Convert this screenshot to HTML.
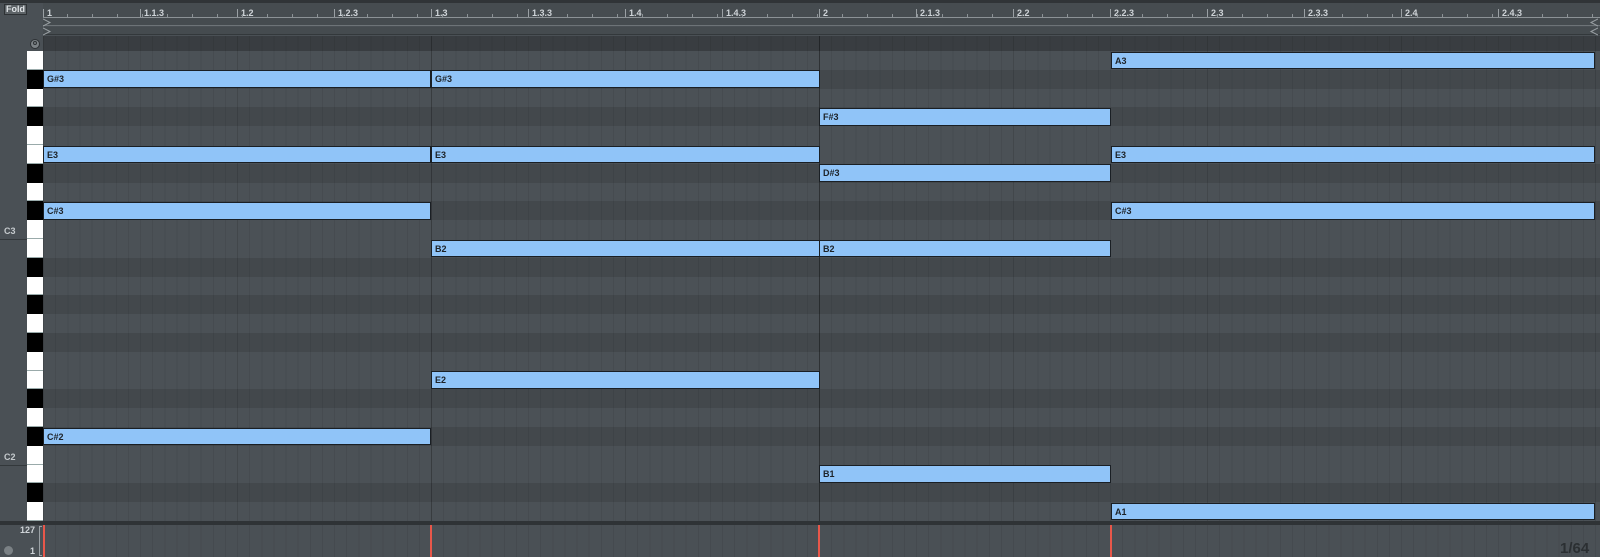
<!DOCTYPE html>
<html><head><meta charset="utf-8"><style>
*{margin:0;padding:0;box-sizing:border-box}
body{width:1600px;height:557px;overflow:hidden;background:#4a5055;font-family:"Liberation Sans",sans-serif;position:relative}
div{position:absolute}
.row{left:43px;width:1557px;height:18.8px}
.w{background:#4b5156}.b{background:#43484c}
.k{left:27px;width:16px;height:18.8px}
.kw{background:#fff;border-bottom:1px solid #9aa}
.kb{background:#000}
.n{height:17.8px;background:#90c4f8;border:1px solid #1a1f24;font-size:9px;font-weight:bold;color:#1d2227;padding:4px 0 0 3px;line-height:9px}
.rl{top:8px;font-size:9px;font-weight:bold;color:#cfd4d8}
.tk{top:9px;width:1px;height:8px;background:#9aa0a4}
.vel{width:2px;top:525px;height:32px;background:#e8574a}
</style></head><body>
<div style="left:0;top:0;width:1600px;height:3px;background:#303437"></div>
<div style="left:43px;top:3px;width:1557px;height:14px;background:#464c50"></div>
<div style="left:43px;top:17px;width:1557px;height:1px;background:#8c9296"></div>
<div style="left:43px;top:18px;width:1557px;height:8px;background:#454b4f;border-bottom:1px solid #6d7377"></div>
<div style="left:43px;top:27px;width:1557px;height:8px;background:#454b4f;border-bottom:1px solid #33383b"></div>
<div style="left:43px;top:36px;width:1557px;height:15px;background:#393d41"></div>
<div style="left:4px;top:4px;width:23px;height:11px;background:#5d6367;border:1px solid #2e3235;font-size:9px;font-weight:bold;color:#dfe3e6;text-align:center;line-height:9px">Fold</div>
<div style="left:30px;top:39px;width:10px;height:10px;border-radius:50%;background:#7b8185;border:1px solid #2e3235"></div>
<div style="left:33px;top:41px;width:4px;height:4px;border-radius:50%;border:1px solid #2e3235"></div>
<svg style="position:absolute;left:43px;top:18px" width="10" height="18"><path d="M0 1L7 4.5L0 8M0 10L7 13.5L0 17" stroke="#9aa0a4" fill="none"/></svg>
<svg style="position:absolute;left:1588px;top:18px" width="10" height="18"><path d="M10 1L3 4.5L10 8M10 10L3 13.5L10 17" stroke="#9aa0a4" fill="none"/></svg>

<div class="tk" style="left:43px"></div><div class="rl" style="left:47px">1</div>
<div class="tk" style="left:140px"></div><div class="rl" style="left:144px">1.1.3</div>
<div class="tk" style="left:237px"></div><div class="rl" style="left:241px">1.2</div>
<div class="tk" style="left:334px"></div><div class="rl" style="left:338px">1.2.3</div>
<div class="tk" style="left:431px"></div><div class="rl" style="left:435px">1.3</div>
<div class="tk" style="left:528px"></div><div class="rl" style="left:532px">1.3.3</div>
<div class="tk" style="left:625px"></div><div class="rl" style="left:629px">1.4</div>
<div class="tk" style="left:722px"></div><div class="rl" style="left:726px">1.4.3</div>
<div class="tk" style="left:819px"></div><div class="rl" style="left:823px">2</div>
<div class="tk" style="left:916px"></div><div class="rl" style="left:920px">2.1.3</div>
<div class="tk" style="left:1013px"></div><div class="rl" style="left:1017px">2.2</div>
<div class="tk" style="left:1110px"></div><div class="rl" style="left:1114px">2.2.3</div>
<div class="tk" style="left:1207px"></div><div class="rl" style="left:1211px">2.3</div>
<div class="tk" style="left:1304px"></div><div class="rl" style="left:1308px">2.3.3</div>
<div class="tk" style="left:1401px"></div><div class="rl" style="left:1405px">2.4</div>
<div class="tk" style="left:1498px"></div><div class="rl" style="left:1502px">2.4.3</div>
<div style="left:43px;top:14px;width:1557px;height:3px;background:repeating-linear-gradient(90deg,transparent 0 24px,#8c9296 24px 25px)"></div>

<div class="row w" style="top:51px"></div><div class="row b" style="top:69.8px"></div><div class="row w" style="top:88.6px"></div><div class="row b" style="top:107.4px"></div><div class="row w" style="top:126.2px"></div><div class="row w" style="top:145px"></div><div class="row b" style="top:163.8px"></div><div class="row w" style="top:182.6px"></div><div class="row b" style="top:201.4px"></div><div class="row w" style="top:220.2px"></div><div class="row w" style="top:239px"></div><div class="row b" style="top:257.8px"></div><div class="row w" style="top:276.6px"></div><div class="row b" style="top:295.4px"></div><div class="row w" style="top:314.2px"></div><div class="row b" style="top:333px"></div><div class="row w" style="top:351.8px"></div><div class="row w" style="top:370.6px"></div><div class="row b" style="top:389.4px"></div><div class="row w" style="top:408.2px"></div><div class="row b" style="top:427px"></div><div class="row w" style="top:445.8px"></div><div class="row w" style="top:464.6px"></div><div class="row b" style="top:483.4px"></div><div class="row w" style="top:502.2px"></div>
<div style="left:43px;top:36px;width:1557px;height:485px;background:repeating-linear-gradient(90deg,rgba(0,0,0,.07) 0 1px,transparent 1px 12.125px)"></div>
<div style="left:43px;top:36px;width:1557px;height:485px;background:repeating-linear-gradient(90deg,rgba(0,0,0,.06) 0 1px,transparent 1px 194px)"></div>
<div style="left:431px;top:36px;width:1px;height:485px;background:rgba(0,0,0,.15)"></div>
<div style="left:819px;top:36px;width:1px;height:485px;background:rgba(0,0,0,.3)"></div>

<div class="k kw" style="top:51px"></div><div class="k kb" style="top:69.8px"></div><div class="k kw" style="top:88.6px"></div><div class="k kb" style="top:107.4px"></div><div class="k kw" style="top:126.2px"></div><div class="k kw" style="top:145px"></div><div class="k kb" style="top:163.8px"></div><div class="k kw" style="top:182.6px"></div><div class="k kb" style="top:201.4px"></div><div class="k kw" style="top:220.2px"></div><div class="k kw" style="top:239px"></div><div class="k kb" style="top:257.8px"></div><div class="k kw" style="top:276.6px"></div><div class="k kb" style="top:295.4px"></div><div class="k kw" style="top:314.2px"></div><div class="k kb" style="top:333px"></div><div class="k kw" style="top:351.8px"></div><div class="k kw" style="top:370.6px"></div><div class="k kb" style="top:389.4px"></div><div class="k kw" style="top:408.2px"></div><div class="k kb" style="top:427px"></div><div class="k kw" style="top:445.8px"></div><div class="k kw" style="top:464.6px"></div><div class="k kb" style="top:483.4px"></div><div class="k kw" style="top:502.2px"></div>
<div style="left:0;top:239px;width:27px;height:1px;background:#33383b"></div>
<div style="left:0;top:465px;width:27px;height:1px;background:#33383b"></div>
<div style="left:4px;top:226px;font-size:9px;font-weight:bold;color:#c5cacd">C3</div>
<div style="left:4px;top:452px;font-size:9px;font-weight:bold;color:#c5cacd">C2</div>

<div class="n" style="left:1111px;width:484px;top:51.5px">A3</div>
<div class="n" style="left:43px;width:388px;top:70.3px">G#3</div>
<div class="n" style="left:431px;width:389px;top:70.3px">G#3</div>
<div class="n" style="left:819px;width:292px;top:107.9px">F#3</div>
<div class="n" style="left:43px;width:388px;top:145.5px">E3</div>
<div class="n" style="left:431px;width:389px;top:145.5px">E3</div>
<div class="n" style="left:1111px;width:484px;top:145.5px">E3</div>
<div class="n" style="left:819px;width:292px;top:164.3px">D#3</div>
<div class="n" style="left:43px;width:388px;top:201.9px">C#3</div>
<div class="n" style="left:1111px;width:484px;top:201.9px">C#3</div>
<div class="n" style="left:431px;width:389px;top:239.5px">B2</div>
<div class="n" style="left:819px;width:292px;top:239.5px">B2</div>
<div class="n" style="left:431px;width:389px;top:371.1px">E2</div>
<div class="n" style="left:43px;width:388px;top:427.5px">C#2</div>
<div class="n" style="left:819px;width:292px;top:465.1px">B1</div>
<div class="n" style="left:1111px;width:484px;top:502.7px">A1</div>

<div style="left:0;top:521px;width:1600px;height:4px;background:#2f3336"></div>
<div style="left:43px;top:525px;width:1557px;height:32px;background:#4a5055"></div>
<div style="left:43px;top:525px;width:1557px;height:32px;background:repeating-linear-gradient(90deg,rgba(0,0,0,.07) 0 1px,transparent 1px 12.125px)"></div>
<div style="left:20px;top:525px;font-size:9px;font-weight:bold;color:#cfd4d8">127</div>
<div style="left:30px;top:546px;font-size:9px;font-weight:bold;color:#cfd4d8">1</div>
<div style="left:39px;top:526px;width:3px;height:30px;border:1px solid #9aa0a4;border-right:none"></div>
<div style="left:4px;top:546px;width:9px;height:9px;border-radius:50%;background:#7b8185"></div>
<div class="vel" style="left:43px"></div><div class="vel" style="left:430px"></div><div class="vel" style="left:818px"></div><div class="vel" style="left:1110px"></div>
<div style="left:1560px;top:540px;font-size:15px;font-weight:bold;color:#2b2f32">1/64</div>
</body></html>
